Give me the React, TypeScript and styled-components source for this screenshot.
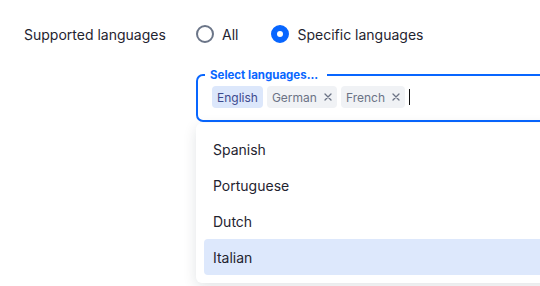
import * as React from "react"
import styled, { createGlobalStyle } from "styled-components"

const GlobalStyle = createGlobalStyle`
  html, body {
    margin: 0;
    padding: 0;
    background: #ffffff;
    overflow: hidden;
  }
  body {
    font-family: Inter, "Noto Sans", sans-serif;
    color: #1f2430;
  }
`

const colors = {
  blue: "#0866ff",
  text: "#1f2430",
  muted: "#6b7385",
  chip: "#f0f2f5",
  chipActive: "#dce7fb",
  chipActiveText: "#3c4a8e",
  highlight: "#dde8fc"
}

const Page = styled.div`
  display: grid;
  grid-template-columns: 172px 1fr;
  row-gap: 21px;
  padding: 24px 0 0 24px;
  width: 540px;
  height: 286px;
  overflow: hidden;
  box-sizing: border-box;
`

const Label = styled.div`
  height: 20px;
  display: flex;
  align-items: center;
  font-size: 14px;
  color: ${colors.text};
`

const RadioGroup = styled.div`
  display: flex;
  align-items: center;
  gap: 33px;
  height: 20px;
`

const RadioOption = styled.label`
  display: flex;
  align-items: center;
  gap: 8px;
  font-size: 14px;
  color: ${colors.text};
`

const RadioCircle = styled.span<{ $checked?: boolean }>`
  width: 18px;
  height: 18px;
  box-sizing: border-box;
  border-radius: 50%;
  display: flex;
  align-items: center;
  justify-content: center;
  border: 2px solid ${(p) => (p.$checked ? colors.blue : "#6b7588")};
  background: ${(p) => (p.$checked ? colors.blue : "#fff")};

  &::after {
    content: "";
    display: ${(p) => (p.$checked ? "block" : "none")};
    width: 6px;
    height: 6px;
    border-radius: 50%;
    background: #fff;
  }
`

const FieldColumn = styled.div`
  grid-column: 2;
  display: flex;
  flex-direction: column;
  gap: 1px;
`

const Field = styled.fieldset`
  margin: 0;
  width: 420px;
  padding: 4px 14px 12px 14px;
  border: 2px solid ${colors.blue};
  border-radius: 7px;
  box-sizing: border-box;
`

const Legend = styled.legend`
  margin-left: -7px;
  padding: 0 9px 0 5px;
  font-size: 11.5px;
  line-height: 14px;
  font-weight: 700;
  color: ${colors.blue};
`

const ChipRow = styled.div`
  display: flex;
  align-items: center;
  gap: 4px;
  height: 22px;
`

const Chip = styled.span<{ $active?: boolean }>`
  display: flex;
  align-items: center;
  gap: 7px;
  height: 22px;
  padding: 0 5px;
  border-radius: 4px;
  font-size: 12px;
  background: ${(p) => (p.$active ? colors.chipActive : colors.chip)};
  color: ${(p) => (p.$active ? colors.chipActiveText : colors.muted)};
`

const Caret = styled.span`
  width: 1px;
  height: 16px;
  background: #111;
`

const Menu = styled.ul`
  list-style: none;
  margin: 0;
  padding: 8px 8px;
  width: 420px;
  box-sizing: border-box;
  background: #fff;
  border-radius: 6px;
  box-shadow: 0 4px 14px rgba(20, 30, 50, 0.12);
`

const MenuItem = styled.li<{ $highlighted?: boolean }>`
  height: 36px;
  display: flex;
  align-items: center;
  padding-left: 9px;
  border-radius: 4px;
  font-size: 14px;
  color: ${colors.text};
  background: ${(p) => (p.$highlighted ? colors.highlight : "transparent")};
`

const RemoveIcon = () => (
  <svg width="8" height="8" viewBox="0 0 8 8" fill="none">
    <path d="M1 1L7 7M7 1L1 7" stroke={colors.muted} strokeWidth="1.3" strokeLinecap="round" />
  </svg>
)

const selected = [
  { name: "English", fixed: true },
  { name: "German", fixed: false },
  { name: "French", fixed: false }
]

const options = ["Spanish", "Portuguese", "Dutch", "Italian"]

export default function App() {
  return (
    <>
      <GlobalStyle />
      <Page>
        <Label>Supported languages</Label>
        <RadioGroup>
          <RadioOption>
            <RadioCircle />
            All
          </RadioOption>
          <RadioOption>
            <RadioCircle $checked />
            Specific languages
          </RadioOption>
        </RadioGroup>
        <FieldColumn>
          <Field>
            <Legend>Select languages...</Legend>
            <ChipRow>
              {selected.map((lang) => (
                <Chip key={lang.name} $active={lang.fixed}>
                  {lang.name}
                  {!lang.fixed && <RemoveIcon />}
                </Chip>
              ))}
              <Caret />
            </ChipRow>
          </Field>
          <Menu>
            {options.map((opt) => (
              <MenuItem key={opt} $highlighted={opt === "Italian"}>
                {opt}
              </MenuItem>
            ))}
          </Menu>
        </FieldColumn>
      </Page>
    </>
  )
}
